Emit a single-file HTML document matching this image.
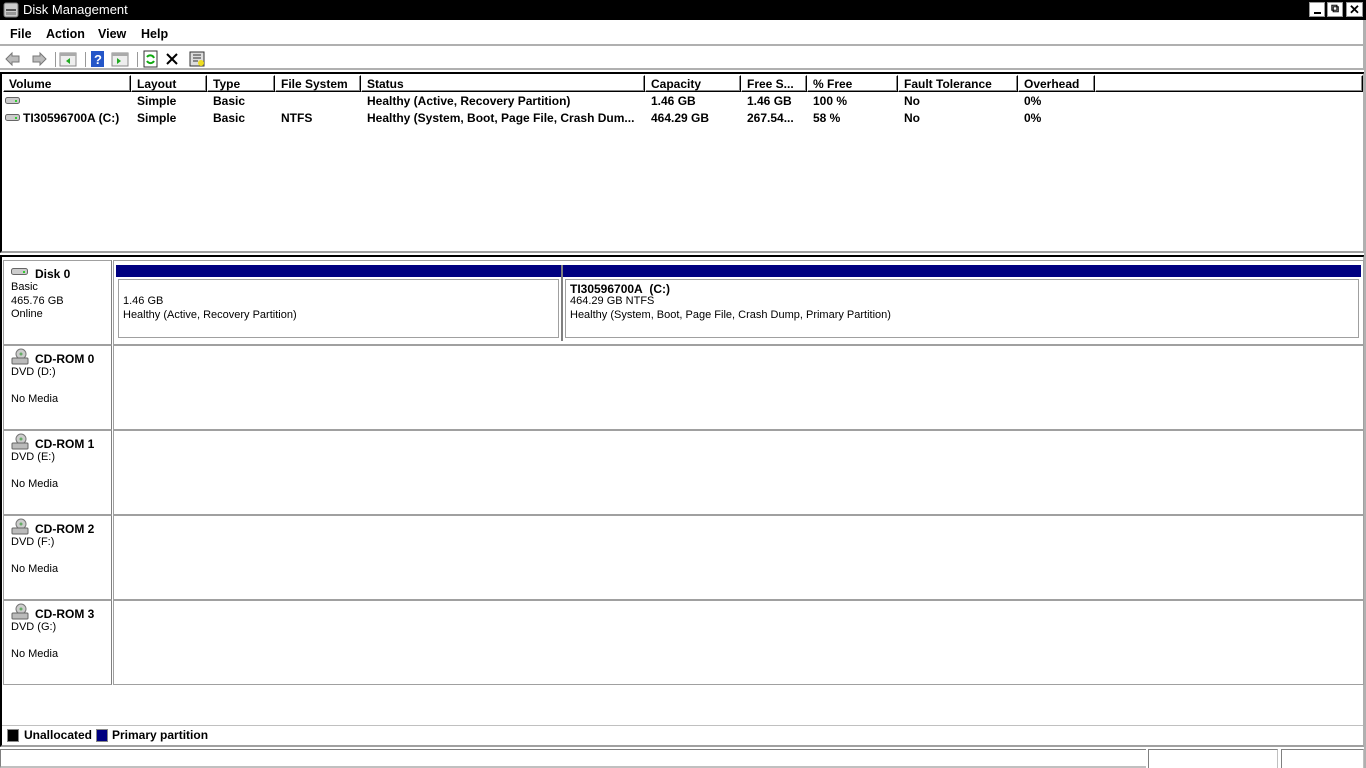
<!DOCTYPE html>
<html><head><meta charset="utf-8"><style>
*{margin:0;padding:0;box-sizing:border-box}
body{width:1366px;height:768px;overflow:hidden;background:#fff;font-family:"Liberation Sans",sans-serif;position:relative;color:#000}
.a{position:absolute}
.b{font-weight:bold;font-size:12px}
.n{font-size:11px}
.hd{position:absolute;top:75px;height:17px;border:1px solid #000;border-top:1px solid #fff;border-left:1px solid #fff;box-shadow:inset -1px -1px 0 #888;background:#fff;font-weight:bold;font-size:12px;padding:1px 0 0 5px;white-space:nowrap;overflow:hidden}
.lab{position:absolute;left:3px;width:109px;border:1px solid #a0a0a0;border-right:1px solid #808080}
.box{position:absolute;left:113px;width:1251px;border:1px solid #a0a0a0}
.cd{position:absolute;left:11px;width:16px;height:14px}
</style></head><body>
<!-- title bar -->
<div class="a" style="left:0;top:0;width:1366px;height:20px;background:#000"></div>
<svg class="a" style="left:3px;top:2px" width="16" height="16"><rect x="1" y="1" width="14" height="14" rx="2" fill="#ccc" stroke="#777"/><rect x="3" y="7" width="10" height="2" fill="#555"/><rect x="3" y="10" width="10" height="3" fill="#999"/></svg>
<div class="a" style="left:23px;top:2px;color:#fff;font-size:13px">Disk Management</div>
<div class="a" style="left:1309px;top:2px;width:16px;height:15px;background:#fff;border:1px solid #999"><div class="a" style="left:4px;top:9px;width:7px;height:2px;background:#000"></div></div>
<div class="a" style="left:1327px;top:2px;width:16px;height:15px;background:#fff;border:1px solid #999;font-size:11px;font-weight:bold;text-align:center;line-height:13px">&#10697;</div>
<div class="a" style="left:1346px;top:2px;width:17px;height:15px;background:#fff;border:1px solid #999;font-size:13px;font-weight:bold;text-align:center;line-height:14px">✕</div>
<!-- menu -->
<div class="a" style="left:0;top:20px;width:1366px;height:26px;border-bottom:2px solid #b0b0b0;border-right:3px solid #b0b0b0"></div>
<div class="a b" style="left:10px;top:27px;font-size:12.5px">File</div>
<div class="a b" style="left:46px;top:27px;font-size:12.5px">Action</div>
<div class="a b" style="left:98px;top:27px;font-size:12.5px">View</div>
<div class="a b" style="left:141px;top:27px;font-size:12.5px">Help</div>
<!-- toolbar -->
<div class="a" style="left:0;top:46px;width:1366px;height:24px;border-bottom:2px solid #b0b0b0;border-right:3px solid #b0b0b0"></div>
<svg class="a" style="left:4px;top:50px" width="210" height="18">
<path d="M2 9 L8 3 V6 H15 V12 H8 V15 Z" fill="#bbb" stroke="#777"/>
<path d="M42 9 L36 3 V6 H29 V12 H36 V15 Z" fill="#bbb" stroke="#777"/>
<rect x="51" y="2" width="1" height="15" fill="#999"/>
<rect x="56" y="3" width="16" height="13" fill="#eee" stroke="#888"/><rect x="56" y="3" width="16" height="3" fill="#aaa"/><path d="M66 8 L62 11 L66 14Z" fill="#2a2"/>
<rect x="81" y="2" width="1" height="15" fill="#999"/>
<rect x="87" y="1" width="13" height="16" fill="#2456c8"/><text x="90" y="14" fill="#fff" font-size="13" font-weight="bold" font-family="Liberation Sans">?</text>
<rect x="108" y="3" width="16" height="13" fill="#eee" stroke="#888"/><rect x="108" y="3" width="16" height="3" fill="#aaa"/><path d="M113 8 L117 11 L113 14Z" fill="#2a2"/>
<rect x="133" y="2" width="1" height="15" fill="#999"/>
<rect x="140" y="1" width="13" height="16" fill="#fff" stroke="#333"/><path d="M143 7 A4 4 0 0 1 150 8 M150 11 A4 4 0 0 1 143 11" stroke="#1a1" stroke-width="2" fill="none"/>
<path d="M163 4 L173 14 M173 4 L163 14" stroke="#000" stroke-width="2"/>
<rect x="186" y="2" width="14" height="14" fill="#ddd" stroke="#333"/><path d="M189 5h8M189 8h8M189 11h5" stroke="#333"/><circle cx="197" cy="13" r="3" fill="#ed2"/>
</svg>
<!-- list pane -->
<div class="a" style="left:0;top:72px;width:1366px;height:181px;border-left:2px solid #000;border-top:2px solid #000;border-bottom:2px solid #a0a0a0;border-right:3px solid #b0b0b0"></div>
<div class="hd" style="left:3px;width:128px">Volume</div>
<div class="hd" style="left:131px;width:76px">Layout</div>
<div class="hd" style="left:207px;width:68px">Type</div>
<div class="hd" style="left:275px;width:86px">File System</div>
<div class="hd" style="left:361px;width:284px">Status</div>
<div class="hd" style="left:645px;width:96px">Capacity</div>
<div class="hd" style="left:741px;width:66px">Free S...</div>
<div class="hd" style="left:807px;width:91px">% Free</div>
<div class="hd" style="left:898px;width:120px">Fault Tolerance</div>
<div class="hd" style="left:1018px;width:77px">Overhead</div>
<div class="hd" style="left:1095px;width:268px"></div>
<svg class="a" style="left:5px;top:96px" width="16" height="10"><rect x="0.5" y="1.5" width="14" height="6" rx="2" fill="#ccc" stroke="#666"/><rect x="10" y="4" width="2" height="2" fill="#3c3"/></svg>
<svg class="a" style="left:5px;top:113px" width="16" height="10"><rect x="0.5" y="1.5" width="14" height="6" rx="2" fill="#ccc" stroke="#666"/><rect x="10" y="4" width="2" height="2" fill="#3c3"/></svg>
<div class="a b" style="top:94px;left:137px">Simple</div><div class="a b" style="top:94px;left:213px">Basic</div><div class="a b" style="top:94px;left:367px">Healthy (Active, Recovery Partition)</div><div class="a b" style="top:94px;left:651px">1.46 GB</div><div class="a b" style="top:94px;left:747px">1.46 GB</div><div class="a b" style="top:94px;left:813px">100 %</div><div class="a b" style="top:94px;left:904px">No</div><div class="a b" style="top:94px;left:1024px">0%</div>
<div class="a b" style="top:111px;left:23px">TI30596700A (C:)</div><div class="a b" style="top:111px;left:137px">Simple</div><div class="a b" style="top:111px;left:213px">Basic</div><div class="a b" style="top:111px;left:281px">NTFS</div><div class="a b" style="top:111px;left:367px">Healthy (System, Boot, Page File, Crash Dum...</div><div class="a b" style="top:111px;left:651px">464.29 GB</div><div class="a b" style="top:111px;left:747px">267.54...</div><div class="a b" style="top:111px;left:813px">58 %</div><div class="a b" style="top:111px;left:904px">No</div><div class="a b" style="top:111px;left:1024px">0%</div>
<!-- graphic pane -->
<div class="a" style="left:0;top:255px;width:1366px;height:492px;border-left:2px solid #000;border-top:2px solid #000;border-bottom:2px solid #a0a0a0;border-right:3px solid #b0b0b0"></div>
<div class="lab" style="top:260px;height:85px"></div>
<div class="box" style="top:260px;height:85px"></div>
<svg class="a" style="left:11px;top:267px" width="18" height="10"><rect x="0.5" y="1.5" width="16" height="6" rx="2" fill="#ccc" stroke="#666"/><rect x="12" y="4" width="2" height="2" fill="#3c3"/></svg>
<div class="a b" style="left:35px;top:267px">Disk 0</div>
<div class="a n" style="left:11px;top:281px;line-height:13.5px">Basic<br>465.76 GB<br>Online</div>
<div class="a" style="left:116px;top:265px;width:445px;height:12px;background:#000080"></div>
<div class="a" style="left:563px;top:265px;width:798px;height:12px;background:#000080"></div>
<div class="a" style="left:561px;top:265px;width:2px;height:76px;background:#808080"></div>
<div class="a" style="left:118px;top:279px;width:441px;height:59px;border:1px solid #a0a0a0"></div>
<div class="a" style="left:565px;top:279px;width:794px;height:59px;border:1px solid #a0a0a0"></div>
<div class="a n" style="left:123px;top:295px;line-height:13.5px">1.46 GB<br>Healthy (Active, Recovery Partition)</div>
<div class="a b" style="left:570px;top:282px">TI30596700A&nbsp; (C:)</div>
<div class="a n" style="left:570px;top:295px;line-height:13.5px">464.29 GB NTFS<br>Healthy (System, Boot, Page File, Crash Dump, Primary Partition)</div>

<div class="lab" style="top:345px;height:85px"></div><div class="box" style="top:345px;height:85px"></div>
<div class="lab" style="top:430px;height:85px"></div><div class="box" style="top:430px;height:85px"></div>
<div class="lab" style="top:515px;height:85px"></div><div class="box" style="top:515px;height:85px"></div>
<div class="lab" style="top:600px;height:85px"></div><div class="box" style="top:600px;height:85px"></div>

<svg class="a" style="left:11px;top:348px" width="18" height="17"><circle cx="10" cy="6" r="5" fill="#ccc" stroke="#777"/><circle cx="10" cy="6" r="1.5" fill="#6a6"/><rect x="1" y="10" width="16" height="6" rx="1" fill="#bbb" stroke="#666"/></svg>
<div class="a b" style="left:35px;top:352px">CD-ROM 0</div><div class="a n" style="left:11px;top:366px">DVD (D:)</div><div class="a n" style="left:11px;top:393px">No Media</div>
<svg class="a" style="left:11px;top:433px" width="18" height="17"><circle cx="10" cy="6" r="5" fill="#ccc" stroke="#777"/><circle cx="10" cy="6" r="1.5" fill="#6a6"/><rect x="1" y="10" width="16" height="6" rx="1" fill="#bbb" stroke="#666"/></svg>
<div class="a b" style="left:35px;top:437px">CD-ROM 1</div><div class="a n" style="left:11px;top:451px">DVD (E:)</div><div class="a n" style="left:11px;top:478px">No Media</div>
<svg class="a" style="left:11px;top:518px" width="18" height="17"><circle cx="10" cy="6" r="5" fill="#ccc" stroke="#777"/><circle cx="10" cy="6" r="1.5" fill="#6a6"/><rect x="1" y="10" width="16" height="6" rx="1" fill="#bbb" stroke="#666"/></svg>
<div class="a b" style="left:35px;top:522px">CD-ROM 2</div><div class="a n" style="left:11px;top:536px">DVD (F:)</div><div class="a n" style="left:11px;top:563px">No Media</div>
<svg class="a" style="left:11px;top:603px" width="18" height="17"><circle cx="10" cy="6" r="5" fill="#ccc" stroke="#777"/><circle cx="10" cy="6" r="1.5" fill="#6a6"/><rect x="1" y="10" width="16" height="6" rx="1" fill="#bbb" stroke="#666"/></svg>
<div class="a b" style="left:35px;top:607px">CD-ROM 3</div><div class="a n" style="left:11px;top:621px">DVD (G:)</div><div class="a n" style="left:11px;top:648px">No Media</div>
<!-- legend -->
<div class="a" style="left:2px;top:725px;width:1361px;height:1px;background:#c0c0c0"></div>
<div class="a" style="left:7px;top:729px;width:12px;height:13px;background:#000;border:1px solid #888"></div>
<div class="a b" style="left:24px;top:728px">Unallocated</div>
<div class="a" style="left:96px;top:729px;width:12px;height:13px;background:#000080;border:1px solid #888"></div>
<div class="a b" style="left:112px;top:728px">Primary partition</div>
<!-- status bar -->
<div class="a" style="left:0;top:749px;width:1146px;height:19px;border-top:1px solid #808080;border-left:1px solid #808080;border-bottom:2px solid #c0c0c0"></div>
<div class="a" style="left:1148px;top:749px;width:130px;height:19px;border-top:1px solid #808080;border-left:1px solid #808080;border-right:1px solid #c0c0c0"></div>
<div class="a" style="left:1281px;top:749px;width:83px;height:19px;border-top:1px solid #808080;border-left:1px solid #808080;border-right:1px solid #c0c0c0"></div>
<div class="a" style="left:1364px;top:20px;width:2px;height:748px;background:#b0b0b0"></div>
</body></html>
